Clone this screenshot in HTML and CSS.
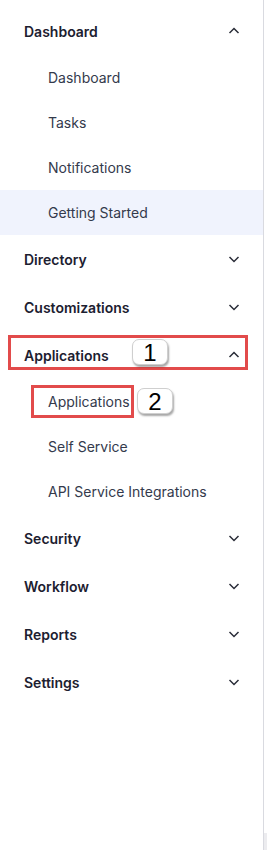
FILE: index.html
```html
<!DOCTYPE html>
<html lang="en">
<head>
    <meta charset="UTF-8">
    <meta name="viewport" content="width=device-width, initial-scale=1.0">
    <title>Navigation</title>
    <link rel="stylesheet" href="styles.css">
</head>
<body>

    <!-- Sidebar -->
    <div class="sidebar">
        <div class="group">
            <div class="group-head">Dashboard
                <svg class="chev" viewBox="0 0 12 12"><path d="M1.5 8 L6 3.5 L10.5 8"/></svg>
            </div>
            <a href="#" class="item">Dashboard</a>
            <a href="#" class="item">Tasks</a>
            <a href="#" class="item">Notifications</a>
            <a href="#" class="item active">Getting Started</a>
        </div>

        <div class="group-head">Directory
            <svg class="chev" viewBox="0 0 12 12"><path d="M1.5 4 L6 8.5 L10.5 4"/></svg>
        </div>
        <div class="group-head">Customizations
            <svg class="chev" viewBox="0 0 12 12"><path d="M1.5 4 L6 8.5 L10.5 4"/></svg>
        </div>

        <div class="group">
            <div class="group-head">Applications
                <svg class="chev" viewBox="0 0 12 12"><path d="M1.5 8 L6 3.5 L10.5 8"/></svg>
            </div>
            <a href="#" class="item">Applications</a>
            <a href="#" class="item">Self Service</a>
            <a href="#" class="item">API Service Integrations</a>
        </div>

        <div class="group-head">Security
            <svg class="chev" viewBox="0 0 12 12"><path d="M1.5 4 L6 8.5 L10.5 4"/></svg>
        </div>
        <div class="group-head">Workflow
            <svg class="chev" viewBox="0 0 12 12"><path d="M1.5 4 L6 8.5 L10.5 4"/></svg>
        </div>
        <div class="group-head">Reports
            <svg class="chev" viewBox="0 0 12 12"><path d="M1.5 4 L6 8.5 L10.5 4"/></svg>
        </div>
        <div class="group-head">Settings
            <svg class="chev" viewBox="0 0 12 12"><path d="M1.5 4 L6 8.5 L10.5 4"/></svg>
        </div>
    </div>

    <!-- Annotations -->
    <div class="mark mark-1"></div>
    <div class="badge badge-1">1</div>
    <div class="mark mark-2"></div>
    <div class="badge badge-2">2</div>

    <div class="scroll-stub"></div>

</body>
</html>
```

FILE: styles.css
```css
body {
    font-family: Inter, "Noto Sans", sans-serif;
    background-color: white;
    margin: 0;
    padding: 0;
}

/* Sidebar */
.sidebar {
    width: 263px;
    height: 100vh;
    border-right: 1px solid #d9dae0;
    padding-top: 7px;
    box-sizing: content-box;
}

.group-head {
    display: flex;
    align-items: center;
    justify-content: space-between;
    height: 48px;
    padding: 0 23px 0 24px;
    font-size: 14px;
    font-weight: 600;
    color: #1c2030;
}

.chev {
    width: 12px;
    height: 12px;
    fill: none;
    stroke: #2a2d38;
    stroke-width: 1.5;
}

.item {
    display: flex;
    align-items: center;
    height: 45px;
    padding-left: 48px;
    font-size: 14px;
    text-decoration: none;
    color: #343a4c;
}

.item.active {
    background-color: #f0f3fd;
}

/* Annotations */
.mark {
    position: absolute;
    border: 3px solid #e24b4b;
    box-sizing: border-box;
}

.mark-1 {
    left: 8px;
    top: 335px;
    width: 240px;
    height: 35px;
}

.mark-2 {
    left: 31px;
    top: 385px;
    width: 103px;
    height: 33px;
}

.badge {
    position: absolute;
    width: 36px;
    height: 26px;
    background: white;
    border: 1px solid #cfcfcf;
    border-radius: 7px;
    box-shadow: 1px 2px 2px rgba(0, 0, 0, 0.35);
    box-sizing: border-box;
    font-family: "Liberation Sans", Arial, sans-serif;
    font-size: 24px;
    line-height: 25px;
    text-align: center;
    color: black;
}

.badge-1 {
    left: 132px;
    top: 339px;
}

.badge-2 {
    left: 137px;
    top: 388px;
}

.scroll-stub {
    position: absolute;
    left: 264px;
    top: 833px;
    width: 3px;
    height: 17px;
    background: #ececef;
}
```
